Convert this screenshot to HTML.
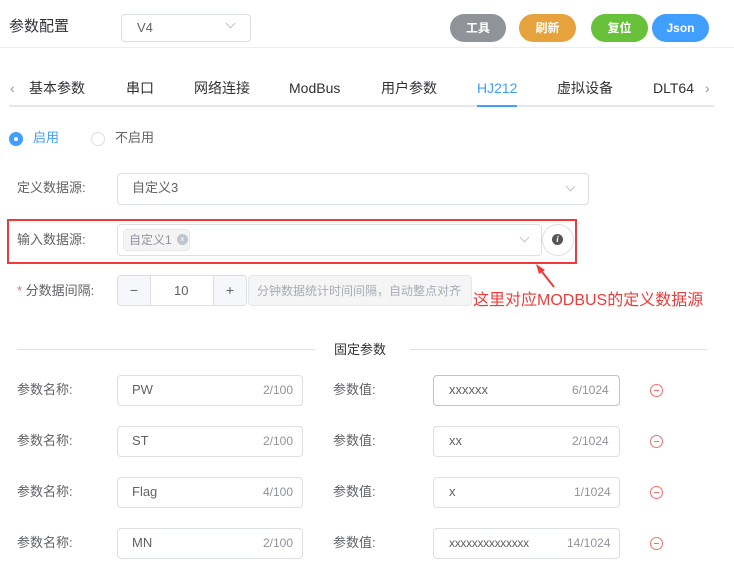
<!DOCTYPE html>
<html><head><meta charset="utf-8"><style>
*{box-sizing:border-box;margin:0;padding:0}
body{width:734px;height:569px;background:#fff;position:relative;overflow:hidden;font-family:"Liberation Sans","Noto Sans CJK SC",sans-serif;color:#606266;font-size:13px}
.a{position:absolute}
.t{position:absolute;white-space:nowrap;line-height:1}
.box{position:absolute;border:1px solid #dcdfe6;border-radius:4px;background:#fff}
.btn{position:absolute;top:14px;height:28px;border-radius:14px;color:#fff;font-size:12px;font-weight:bold;text-align:center;line-height:28px}
.chev{position:absolute;width:7px;height:7px;border-right:1px solid #c0c4cc;border-bottom:1px solid #c0c4cc;transform:rotate(45deg)}
.cnt{position:absolute;font-size:12px;color:#909399;line-height:1}
.mi{position:absolute;width:13px;height:13px;border:1px solid #f56c6c;border-radius:50%}
.mi:after{content:"";position:absolute;left:3px;top:5px;width:5px;height:1px;background:#f56c6c}
</style></head><body>
<div class="t" style="left:9px;top:19px;font-size:15px;color:#303133">参数配置</div>
<div class="box" style="left:121px;top:14px;width:130px;height:28px"></div>
<div class="t" style="left:137px;top:21px;font-size:13px;color:#606266">V4</div>
<div class="chev" style="left:227px;top:20px"></div>
<div class="btn" style="left:450px;width:56px;background:#909399">工具</div>
<div class="btn" style="left:519px;width:57px;background:#e6a23c">刷新</div>
<div class="btn" style="left:591px;width:57px;background:#67c23a">复位</div>
<div class="btn" style="left:652px;width:57px;background:#409eff">Json</div>
<div class="a" style="left:0;top:47px;width:734px;height:1px;background:#ebeef5"></div>
<div class="t" style="left:10px;top:81px;font-size:14px;color:#909399">‹</div>
<div class="t" style="left:29px;top:81px;font-size:14px;color:#303133">基本参数</div>
<div class="t" style="left:126px;top:81px;font-size:14px;color:#303133">串口</div>
<div class="t" style="left:194px;top:81px;font-size:14px;color:#303133">网络连接</div>
<div class="t" style="left:289px;top:81px;font-size:14px;color:#303133">ModBus</div>
<div class="t" style="left:381px;top:81px;font-size:14px;color:#303133">用户参数</div>
<div class="t" style="left:477px;top:81px;font-size:14px;color:#409eff">HJ212</div>
<div class="t" style="left:557px;top:81px;font-size:14px;color:#303133">虚拟设备</div>
<div class="t" style="left:653px;top:81px;font-size:14px;color:#303133">DLT64</div>
<div class="t" style="left:705px;top:81px;font-size:14px;color:#909399">›</div>
<div class="a" style="left:9px;top:105px;width:705px;height:2px;background:#e4e7ed"></div>
<div class="a" style="left:477px;top:105px;width:40px;height:2px;background:#409eff"></div>
<div class="a" style="left:9px;top:132px;width:14px;height:14px;border-radius:50%;background:#409eff"></div>
<div class="a" style="left:14px;top:137px;width:4px;height:4px;border-radius:50%;background:#fff"></div>
<div class="t" style="left:33px;top:131px;font-size:13px;color:#409eff">启用</div>
<div class="a" style="left:91px;top:132px;width:14px;height:14px;border-radius:50%;border:1px solid #dcdfe6"></div>
<div class="t" style="left:115px;top:131px;font-size:13px;color:#606266">不启用</div>
<div class="t" style="left:17px;top:181px;font-size:13px">定义数据源:</div>
<div class="box" style="left:117px;top:173px;width:472px;height:32px"></div>
<div class="t" style="left:132px;top:181px;font-size:13px">自定义3</div>
<div class="chev" style="left:567px;top:183px"></div>
<div class="a" style="left:7px;top:219px;width:570px;height:45px;border:2px solid #f03a3a"></div>
<div class="t" style="left:17px;top:233px;font-size:13px">输入数据源:</div>
<div class="box" style="left:117px;top:224px;width:425px;height:32px"></div>
<div class="a" style="left:123px;top:229px;width:67px;height:22px;background:#f4f4f5;border:1px solid #e9e9eb;border-radius:4px"></div>
<div class="t" style="left:129px;top:234px;font-size:12px;color:#909399">自定义1</div>
<div class="a" style="left:177px;top:234px;width:11px;height:11px;border-radius:50%;background:#c0c4cc;color:#fff;font-size:8px;line-height:11px;text-align:center">×</div>
<div class="chev" style="left:521px;top:234px"></div>
<div class="a" style="left:542px;top:224px;width:32px;height:32px;border-radius:50%;border:1px solid #dcdfe6"></div>
<div class="a" style="left:552px;top:234px;width:11px;height:11px;border-radius:50%;background:#555;color:#fff;font-size:9px;line-height:11px;text-align:center;font-style:italic;font-weight:bold;font-family:'Liberation Serif',serif">i</div>
<svg class="a" style="left:530px;top:262px" width="30" height="30"><line x1="24" y1="25" x2="9" y2="6" stroke="#f03a3a" stroke-width="2"/><polygon points="6,2 15,8 9,12" fill="#f03a3a"/></svg>
<div class="t" style="left:473px;top:293px;font-size:16px;color:#f03a3a">这里对应MODBUS的定义数据源</div>
<div class="t" style="left:17px;top:284px;font-size:13px"><span style="color:#f56c6c">*</span> 分数据间隔:</div>
<div class="box" style="left:117px;top:275px;width:130px;height:31px"></div>
<div class="a" style="left:118px;top:276px;width:33px;height:29px;background:#f5f7fa;border-right:1px solid #dcdfe6;border-radius:4px 0 0 4px;text-align:center;line-height:28px;font-size:14px">−</div>
<div class="a" style="left:213px;top:276px;width:33px;height:29px;background:#f5f7fa;border-left:1px solid #dcdfe6;border-radius:0 4px 4px 0;text-align:center;line-height:28px;font-size:14px">+</div>
<div class="t" style="left:174px;top:284px;font-size:13px">10</div>
<div class="a" style="left:248px;top:275px;width:224px;height:31px;background:#f5f5f5;border:1px solid #e4e7ed;border-radius:4px"></div>
<div class="t" style="left:257px;top:285px;font-size:12px;color:#a8abb2">分钟数据统计时间间隔，自动整点对齐</div>
<div class="a" style="left:17px;top:349px;width:298px;height:1px;background:#dcdfe6"></div>
<div class="a" style="left:410px;top:349px;width:297px;height:1px;background:#dcdfe6"></div>
<div class="t" style="left:334px;top:343px;font-size:13px;color:#303133">固定参数</div>

<div class="t" style="left:17px;top:383px">参数名称:</div>
<div class="box" style="left:117px;top:375px;width:186px;height:31px"></div>
<div class="t" style="left:132px;top:383px">PW</div><div class="cnt" style="left:263px;top:384px">2/100</div>
<div class="t" style="left:333px;top:383px">参数值:</div>
<div class="box" style="left:433px;top:375px;width:187px;height:31px;border-color:#c0c4cc"></div>
<div class="t" style="left:449px;top:383px">xxxxxx</div><div class="cnt" style="left:572px;top:384px">6/1024</div>
<div class="mi" style="left:650px;top:384px"></div>

<div class="t" style="left:17px;top:434px">参数名称:</div>
<div class="box" style="left:117px;top:426px;width:186px;height:31px"></div>
<div class="t" style="left:132px;top:434px">ST</div><div class="cnt" style="left:263px;top:435px">2/100</div>
<div class="t" style="left:333px;top:434px">参数值:</div>
<div class="box" style="left:433px;top:426px;width:187px;height:31px"></div>
<div class="t" style="left:449px;top:434px">xx</div><div class="cnt" style="left:572px;top:435px">2/1024</div>
<div class="mi" style="left:650px;top:435px"></div>

<div class="t" style="left:17px;top:485px">参数名称:</div>
<div class="box" style="left:117px;top:477px;width:186px;height:31px"></div>
<div class="t" style="left:132px;top:485px">Flag</div><div class="cnt" style="left:263px;top:486px">4/100</div>
<div class="t" style="left:333px;top:485px">参数值:</div>
<div class="box" style="left:433px;top:477px;width:187px;height:31px"></div>
<div class="t" style="left:449px;top:485px">x</div><div class="cnt" style="left:574px;top:486px">1/1024</div>
<div class="mi" style="left:650px;top:486px"></div>

<div class="t" style="left:17px;top:536px">参数名称:</div>
<div class="box" style="left:117px;top:528px;width:186px;height:31px"></div>
<div class="t" style="left:132px;top:536px">MN</div><div class="cnt" style="left:263px;top:537px">2/100</div>
<div class="t" style="left:333px;top:536px">参数值:</div>
<div class="box" style="left:433px;top:528px;width:187px;height:31px"></div>
<div class="t" style="left:449px;top:537px;font-size:12px;letter-spacing:-0.3px">xxxxxxxxxxxxxx</div><div class="cnt" style="left:567px;top:537px">14/1024</div>
<div class="mi" style="left:650px;top:537px"></div>
</body></html>
